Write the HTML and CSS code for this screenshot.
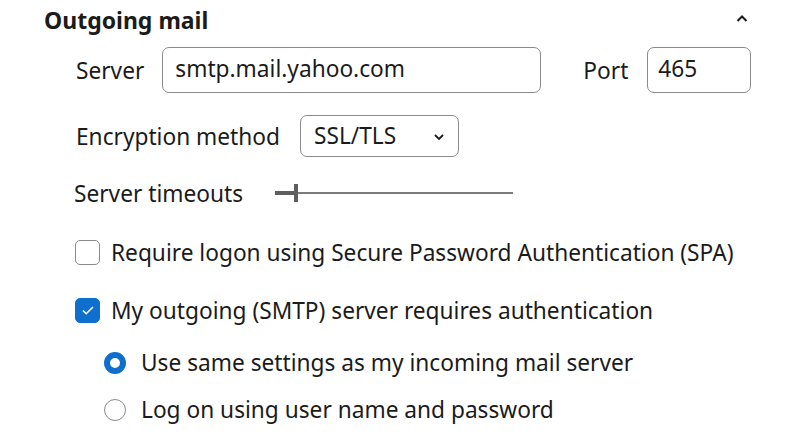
FILE: index.html
```html
<!DOCTYPE html>
<html>
<head>
<meta charset="utf-8">
<link rel="stylesheet" href="styles.css">
</head>
<body>
<div class="panel">
  <div class="header">
    <h2 class="title">Outgoing mail</h2>
    <svg class="chev" width="14" height="10" viewBox="0 0 14 10"><path d="M2.5 7 L7 2.5 L11.5 7" fill="none" stroke="#1a1a1a" stroke-width="2"/></svg>
  </div>
  <div class="row r-server">
    <span class="label">Server</span>
    <div class="input server-input">smtp.mail.yahoo.com</div>
    <span class="label port-label">Port</span>
    <div class="input port-input">465</div>
  </div>
  <div class="row r-enc">
    <span class="label">Encryption method</span>
    <div class="select">
      <span>SSL/TLS</span>
      <svg width="12" height="8" viewBox="0 0 12 8"><path d="M2 2 L6 6 L10 2" fill="none" stroke="#1a1a1a" stroke-width="1.8"/></svg>
    </div>
  </div>
  <div class="row r-timeout">
    <span class="label">Server timeouts</span>
    <div class="slider">
      <div class="fill"></div>
      <div class="thumb"></div>
      <div class="track"></div>
    </div>
  </div>
  <div class="check-row r-spa">
    <span class="checkbox"></span>
    <span class="label">Require logon using Secure Password Authentication (SPA)</span>
  </div>
  <div class="check-row r-auth">
    <span class="checkbox checked"><svg width="14" height="11" viewBox="0 0 14 11"><path d="M2 5.5 L5.2 8.7 L12 2" fill="none" stroke="#fff" stroke-width="1.6"/></svg></span>
    <span class="label">My outgoing (SMTP) server requires authentication</span>
  </div>
  <div class="radio-row r-same">
    <span class="radio selected"></span>
    <span class="label">Use same settings as my incoming mail server</span>
  </div>
  <div class="radio-row r-logon">
    <span class="radio"></span>
    <span class="label">Log on using user name and password</span>
  </div>
</div>
</body>
</html>
```
FILE: styles.css
```css
html, body {
  margin: 0;
  padding: 0;
  background: #ffffff;
}
body {
  font-family: "Noto Sans", "Open Sans", sans-serif;
  color: #1b1b1b;
  font-size: 22.7px;
  width: 804px;
  height: 438px;
  overflow: hidden;
}
.panel {
  padding: 0 0 0 44px;
  width: 760px;
}
.header {
  display: flex;
  align-items: center;
  justify-content: space-between;
  height: 40px;
}
.title {
  margin: 0;
  font-size: 23px;
  font-weight: 700;
  line-height: 40px;
}
.chev {
  margin-right: 55px;
  margin-top: -2px;
}
.row {
  display: flex;
  align-items: center;
}
.label {
  white-space: nowrap;
}
.r-server {
  margin-top: 7px;
  padding-left: 32px;
  height: 46px;
}
.input {
  box-sizing: border-box;
  height: 46px;
  border: 1.5px solid #8a8a8a;
  border-radius: 7px;
  padding: 0 0 0 12px;
  display: flex;
  align-items: center;
  padding-bottom: 4px;
}
.server-input {
  width: 379px;
  margin-left: 18px;
}
.port-label {
  margin-left: 42px;
}
.port-input {
  width: 104px;
  margin-left: 19px;
  padding-left: 10px;
}
.r-enc {
  margin-top: 22px;
  padding-left: 32px;
  height: 42px;
}
.select {
  box-sizing: border-box;
  width: 159px;
  height: 42px;
  margin-left: 20px;
  border: 1.5px solid #8a8a8a;
  border-radius: 7px;
  display: flex;
  align-items: center;
  justify-content: space-between;
  padding: 0 13px 2px 13px;
}
.select svg {
  margin-top: 3px;
}
.r-timeout {
  margin-top: 16px;
  padding-left: 30px;
  height: 40px;
}
.slider {
  position: relative;
  margin-left: 32px;
  width: 238px;
  height: 20px;
  display: flex;
  align-items: center;
}
.fill {
  width: 19px;
  height: 4px;
  background: #5f5f5f;
}
.thumb {
  width: 4px;
  height: 18px;
  background: #5f5f5f;
}
.track {
  flex: 1;
  height: 2px;
  background: #7c7c7c;
}
.check-row {
  display: flex;
  align-items: center;
  padding-left: 31px;
}
.r-spa {
  margin-top: 16px;
  height: 46px;
}
.r-auth {
  margin-top: 12px;
  height: 46px;
}
.checkbox {
  box-sizing: border-box;
  width: 25px;
  height: 25px;
  border: 1.5px solid #8a8a8a;
  border-radius: 5px;
  margin-right: 11px;
  display: flex;
  align-items: center;
  justify-content: center;
}
.checkbox.checked {
  background: #0f6fcf;
  border-color: #0f6fcf;
}
.radio-row {
  display: flex;
  align-items: center;
  padding-left: 60px;
  height: 47px;
}
.r-same {
  margin-top: 6px;
}
.radio {
  box-sizing: border-box;
  width: 22px;
  height: 22px;
  border-radius: 50%;
  border: 1.5px solid #8a8a8a;
  margin-right: 15px;
}
.radio.selected {
  border: 6px solid #0f6fcf;
}
```
